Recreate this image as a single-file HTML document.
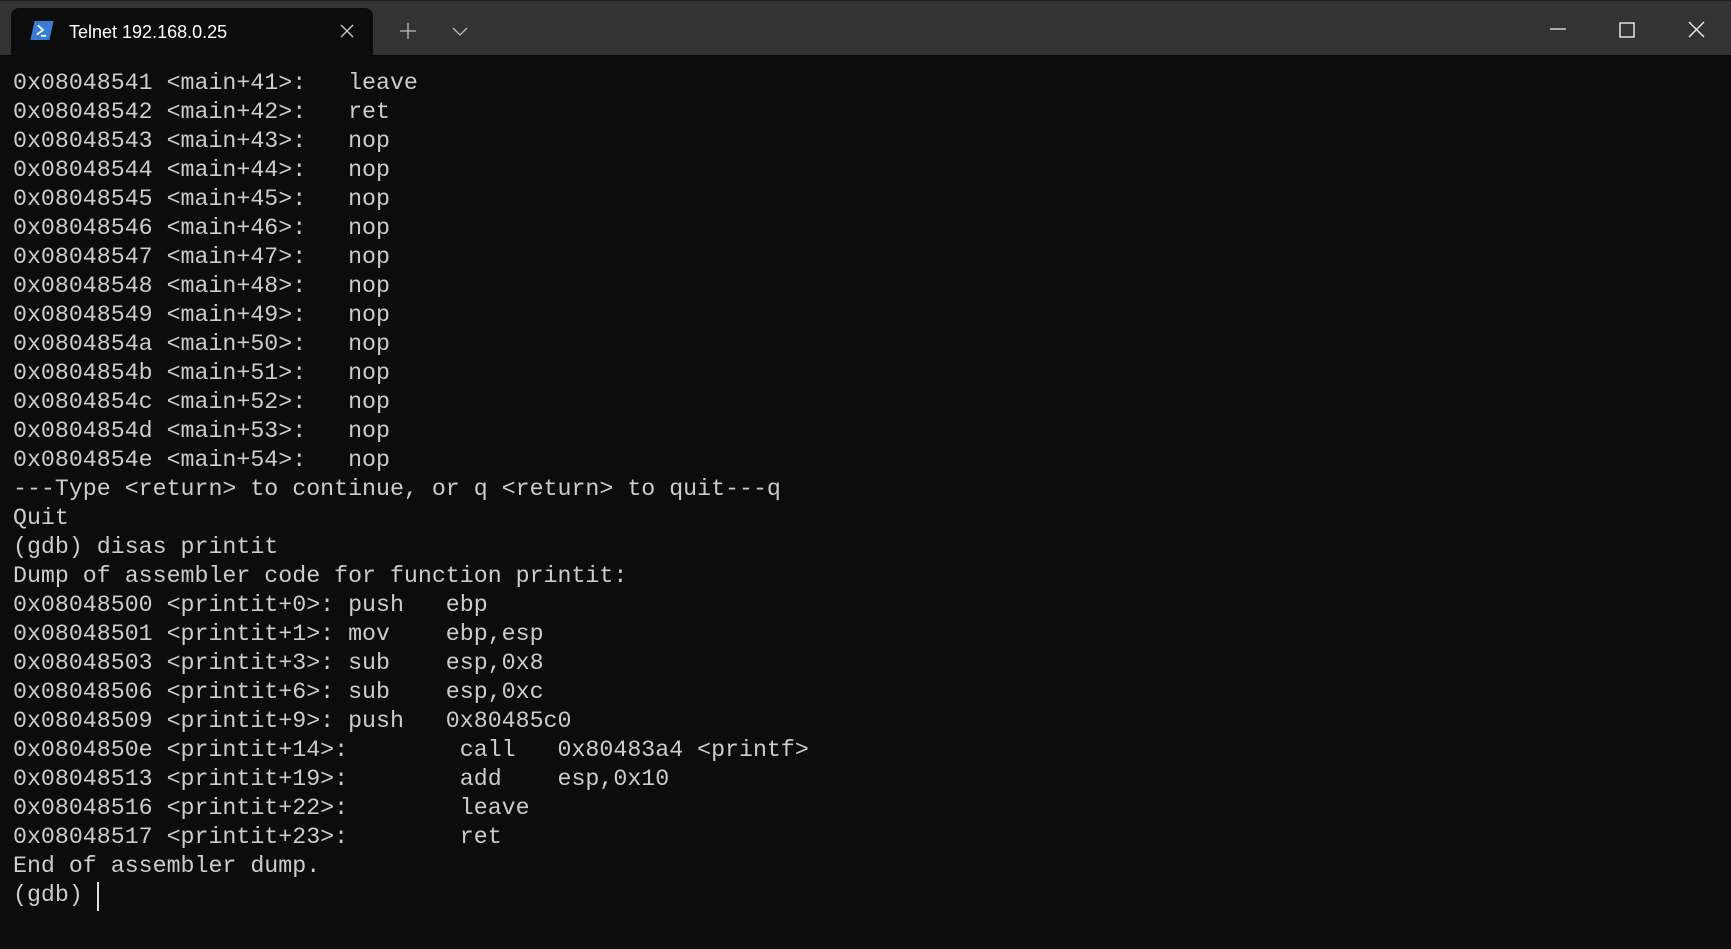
<!DOCTYPE html>
<html><head><meta charset="utf-8"><style>
html,body{margin:0;padding:0;width:1731px;height:949px;overflow:hidden;background:#0c0c0c;}
.bar{position:absolute;left:0;top:0;width:1731px;height:55px;background:#333333;border-top:1px solid #222;box-sizing:border-box;}
.tab{position:absolute;left:11px;top:7px;width:362px;height:48px;background:#0c0c0c;border-radius:8px 8px 0 0;}
.ttl{position:absolute;font:18px "Liberation Sans",sans-serif;color:#fff;}
pre{position:absolute;left:13px;top:69px;margin:0;font:23.27px/29.02px "Liberation Mono",monospace;color:#cccccc;}
.cur{position:absolute;left:97px;top:882px;width:2px;height:29px;background:#ddd;}
</style></head><body>
<div class="bar">
<div class="tab">
<svg style="position:absolute;left:19px;top:13px" width="24" height="19" viewBox="0 0 22 18"><path d="M4 0H22L18 18H0Z" fill="#3a7bd5"/><path d="M7 4L12 8.5L6 13" stroke="#fff" stroke-width="1.6" fill="none"/><path d="M10 14H15" stroke="#fff" stroke-width="1.6"/></svg>
<div class="ttl" style="left:58px;top:14px">Telnet 192.168.0.25</div>
<svg style="position:absolute;left:329px;top:16px" width="14" height="14"><path d="M1 1L13 13M13 1L1 13" stroke="#ccc" stroke-width="1.3"/></svg>
</div>
<svg style="position:absolute;left:399px;top:21px" width="18" height="18"><path d="M9 1V17M1 9H17" stroke="#bbb" stroke-width="1.3"/></svg>
<svg style="position:absolute;left:452px;top:26px" width="16" height="9"><path d="M1 1L8 8L15 1" stroke="#bbb" stroke-width="1.3" fill="none"/></svg>
<svg style="position:absolute;left:1550px;top:26px" width="16" height="4"><path d="M0 2H16" stroke="#eee" stroke-width="1.3"/></svg>
<svg style="position:absolute;left:1619px;top:21px" width="16" height="16"><rect x="1" y="1" width="14" height="14" stroke="#eee" stroke-width="1.4" fill="none"/></svg>
<svg style="position:absolute;left:1688px;top:20px" width="17" height="17"><path d="M1 1L16 16M16 1L1 16" stroke="#eee" stroke-width="1.4"/></svg>
</div>
<pre>0x08048541 &lt;main+41&gt;:   leave
0x08048542 &lt;main+42&gt;:   ret
0x08048543 &lt;main+43&gt;:   nop
0x08048544 &lt;main+44&gt;:   nop
0x08048545 &lt;main+45&gt;:   nop
0x08048546 &lt;main+46&gt;:   nop
0x08048547 &lt;main+47&gt;:   nop
0x08048548 &lt;main+48&gt;:   nop
0x08048549 &lt;main+49&gt;:   nop
0x0804854a &lt;main+50&gt;:   nop
0x0804854b &lt;main+51&gt;:   nop
0x0804854c &lt;main+52&gt;:   nop
0x0804854d &lt;main+53&gt;:   nop
0x0804854e &lt;main+54&gt;:   nop
---Type &lt;return&gt; to continue, or q &lt;return&gt; to quit---q
Quit
(gdb) disas printit
Dump of assembler code for function printit:
0x08048500 &lt;printit+0&gt;: push   ebp
0x08048501 &lt;printit+1&gt;: mov    ebp,esp
0x08048503 &lt;printit+3&gt;: sub    esp,0x8
0x08048506 &lt;printit+6&gt;: sub    esp,0xc
0x08048509 &lt;printit+9&gt;: push   0x80485c0
0x0804850e &lt;printit+14&gt;:        call   0x80483a4 &lt;printf&gt;
0x08048513 &lt;printit+19&gt;:        add    esp,0x10
0x08048516 &lt;printit+22&gt;:        leave
0x08048517 &lt;printit+23&gt;:        ret
End of assembler dump.
(gdb) </pre>
<div class="cur"></div>
</body></html>
